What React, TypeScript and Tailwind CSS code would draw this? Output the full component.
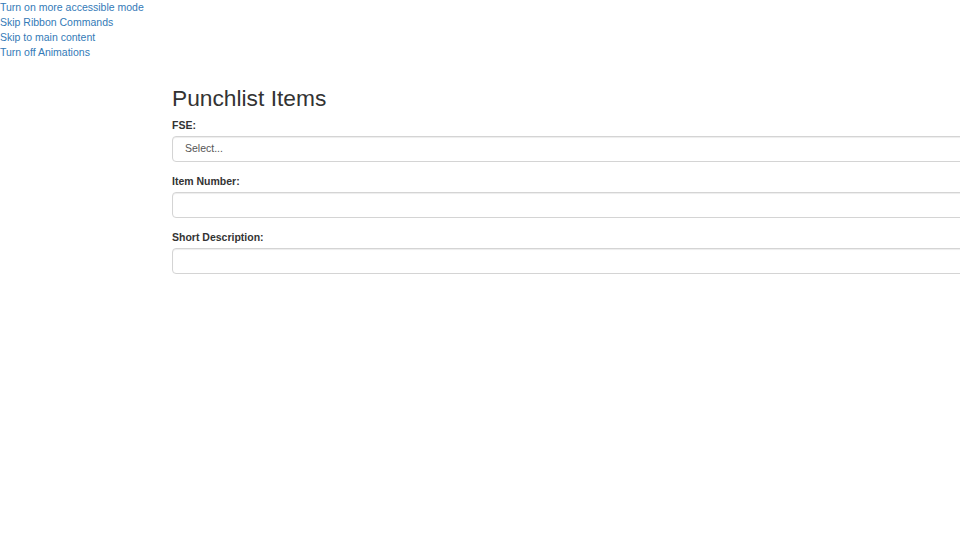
import React from "react";

const links = [
  "Turn on more accessible mode",
  "Skip Ribbon Commands",
  "Skip to main content",
  "Turn off Animations",
];

function Field({ label, children }: { label: string; children?: React.ReactNode }) {
  return (
    <div className="flex flex-col">
      <label className="text-[10.5px] leading-[15px] font-bold text-[#333]">{label}</label>
      <div className="mt-[3px] h-[26px] w-[1000px] flex items-center rounded-[4px] border border-[#d4d4d4] bg-white px-3 shadow-[inset_0_1px_1px_rgba(0,0,0,0.075)]">
        {children}
      </div>
    </div>
  );
}

export default function App() {
  return (
    <div className="h-[540px] w-[960px] overflow-hidden bg-white font-['Liberation_Sans',Arial,sans-serif]">
      <div className="flex flex-col items-start">
        {links.map((l) => (
          <a key={l} href="#" className="text-[10.5px] leading-[15px] text-[#337ab7]">
            {l}
          </a>
        ))}
      </div>
      <div className="ml-[172px] mt-[25px] flex flex-col">
        <h1 className="text-[22.75px] leading-[26px] text-[#333]">Punchlist Items</h1>
        <div className="mt-[7px] flex flex-col gap-[12px]">
          <Field label="FSE:">
            <span className="text-[10.5px] text-[#555]">Select...</span>
          </Field>
          <Field label="Item Number:" />
          <Field label="Short Description:" />
        </div>
      </div>
    </div>
  );
}
